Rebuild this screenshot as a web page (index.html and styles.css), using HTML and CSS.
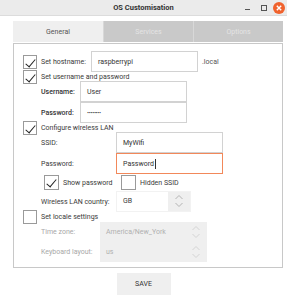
FILE: index.html
```html
<!DOCTYPE html>
<html lang="en">

<head>
    <meta charset="UTF-8">
    <title>OS Customisation</title>
    <link rel="stylesheet" href="styles.css">
</head>

<body>
    <div class="titlebar">
        <span></span>
        <span class="title">OS Customisation</span>
        <div class="controls">
            <span class="ctl-min"></span>
            <span class="ctl-max"></span>
            <span class="ctl-close">
                <svg width="12" height="12" viewBox="0 0 12 12">
                    <circle cx="6" cy="6" r="6" fill="#f0622d" />
                    <path d="M3.8 3.8 L8.2 8.2 M8.2 3.8 L3.8 8.2" stroke="#fff" stroke-width="1.4" />
                </svg>
            </span>
        </div>
    </div>

    <div class="window">
        <div class="tabs">
            <div class="tab active">General</div>
            <div class="tab">Services</div>
            <div class="tab">Options</div>
        </div>

        <div class="panel">
            <!-- hostname -->
            <div class="row row-host">
                <span class="check on"></span>
                <span class="label host-label">Set hostname:</span>
                <span class="input host-input">raspberrypi</span>
                <span class="suffix">.local</span>
            </div>

            <!-- user -->
            <div class="row row-check">
                <span class="check on"></span>
                <span class="label">Set username and password</span>
            </div>
            <div class="field-grid user-grid">
                <span class="label strong">Username:</span>
                <span class="input">User</span>
                <span class="label strong">Password:</span>
                <span class="input dots">&bull;&bull;&bull;&bull;&bull;&bull;&bull;&bull;</span>
            </div>

            <!-- wireless -->
            <div class="row row-check">
                <span class="check on"></span>
                <span class="label">Configure wireless LAN</span>
            </div>
            <div class="field-grid wifi-grid">
                <span class="label">SSID:</span>
                <span class="input">MyWifi</span>
                <span class="label">Password:</span>
                <span class="input focus">Password<span class="caret"></span></span>
            </div>
            <div class="row row-opts">
                <span class="check big on"></span>
                <span class="label opt-label">Show password</span>
                <span class="check big"></span>
                <span class="label">Hidden SSID</span>
            </div>
            <div class="field-grid country-grid">
                <span class="label">Wireless LAN country:</span>
                <span class="combo">
                    <span class="combo-text">GB</span>
                    <span class="spin">
                        <svg width="10" height="14" viewBox="0 0 10 14">
                            <path d="M1.5 5 L5 1.5 L8.5 5 M1.5 9 L5 12.5 L8.5 9" fill="none" stroke="#b4b4b4" stroke-width="1" />
                        </svg>
                    </span>
                </span>
            </div>

            <!-- locale -->
            <div class="row row-check">
                <span class="check"></span>
                <span class="label">Set locale settings</span>
            </div>
            <div class="field-grid locale-grid">
                <span class="label muted">Time zone:</span>
                <span class="combo disabled">
                    <span class="combo-text">America/New_York</span>
                    <span class="spin">
                        <svg width="10" height="14" viewBox="0 0 10 14">
                            <path d="M1.5 5 L5 1.5 L8.5 5 M1.5 9 L5 12.5 L8.5 9" fill="none" stroke="#d4d4d4" stroke-width="1" />
                        </svg>
                    </span>
                </span>
                <span class="label muted">Keyboard layout:</span>
                <span class="combo disabled">
                    <span class="combo-text">us</span>
                    <span class="spin">
                        <svg width="10" height="14" viewBox="0 0 10 14">
                            <path d="M1.5 5 L5 1.5 L8.5 5 M1.5 9 L5 12.5 L8.5 9" fill="none" stroke="#d4d4d4" stroke-width="1" />
                        </svg>
                    </span>
                </span>
            </div>
        </div>

        <div class="footer">
            <button class="btn">SAVE</button>
        </div>
    </div>
</body>

</html>
```

FILE: styles.css
```css
* {
    margin: 0;
    padding: 0;
    box-sizing: border-box;
    font-family: 'Roboto', 'Liberation Sans', sans-serif;
}

body {
    width: 287px;
    height: 300px;
    background: #ffffff;
    color: #3a3a3a;
    font-size: 7px;
    overflow: hidden;
}

/* title bar */
.titlebar {
    height: 16px;
    display: grid;
    grid-template-columns: 1fr auto 1fr;
    align-items: center;
    background: #ebebeb;
    border-bottom: 1px solid #dcdcdc;
}

.title {
    font-weight: bold;
    font-size: 7.5px;
    color: #333;
}

.controls {
    justify-self: end;
    display: flex;
    align-items: center;
    padding-right: 2px;
}

.ctl-min {
    width: 5px;
    height: 1px;
    background: #555;
    margin-top: 4px;
    margin-right: 11px;
}

.ctl-max {
    width: 6px;
    height: 6px;
    border: 1px solid #555;
    margin-right: 6px;
}

.ctl-close {
    display: flex;
}

/* window body */
.window {
    padding: 5px 4px 0 13px;
}

.tabs {
    display: flex;
    height: 21px;
}

.tab {
    width: 90px;
    display: flex;
    justify-content: center;
    align-items: center;
    background: #c9c9c9;
    color: #e4e4e4;
    font-size: 7px;
    border-left: 1px solid #d8d8d8;
}

.tab.active {
    background: #efefef;
    color: #555;
    border-left: none;
}

.panel {
    margin-top: 1px;
    width: 270px;
    height: 225px;
    border: 1px solid #c8c8c8;
    padding: 7px 0 0 9px;
}

.row {
    display: flex;
    align-items: center;
}

.row-host {
    height: 21px;
}

.row-check {
    height: 10px;
}

.check {
    width: 14px;
    height: 14px;
    border: 1px solid #9a9a9a;
    background: #fff;
    flex-shrink: 0;
    margin-right: 4px;
    position: relative;
}

.check.big {
    width: 15px;
    height: 15px;
}

.check.on::after {
    content: "";
    position: absolute;
    left: 4px;
    top: 1px;
    width: 4px;
    height: 9px;
    border-right: 1.2px solid #222;
    border-bottom: 1.2px solid #222;
    transform: rotate(40deg);
}

.label {
    white-space: nowrap;
}

.strong {
    font-weight: 500;
    color: #333;
}

.muted {
    color: #a8a8a8;
}

.host-label {
    width: 50px;
}

.input {
    width: 107px;
    height: 21px;
    border: 1px solid #d2d2d2;
    background: #fff;
    display: flex;
    align-items: center;
    padding-left: 6px;
    color: #333;
}

.dots {
    font-size: 6px;
    letter-spacing: -0.3px;
}

.input.focus {
    border-color: #f2885a;
    position: relative;
    z-index: 1;
}

.caret {
    width: 1px;
    height: 10px;
    background: #333;
    margin-left: 1px;
}

.suffix {
    margin-left: 4px;
    color: #555;
}

.field-grid {
    display: grid;
    align-items: center;
    padding-left: 18px;
}

.field-grid .input:nth-of-type(2),
.field-grid .combo:nth-of-type(2) {
    margin-top: -1px;
}

.user-grid {
    grid-template-columns: 39px 107px;
    grid-template-rows: 20px 21px;
}

.wifi-grid {
    grid-template-columns: 75px 107px;
    grid-template-rows: 20px 21px;
}

.row-opts {
    height: 17px;
    padding-left: 21px;
}

.opt-label {
    width: 58px;
}

.country-grid {
    grid-template-columns: 75px 75px;
    grid-template-rows: 21px;
}

.locale-grid {
    grid-template-columns: 59px 107px;
    grid-template-rows: 20px 20px;
}

.combo {
    height: 21px;
    display: flex;
    background: #fff;
    border: 1px solid #f2f2f2;
}

.combo-text {
    flex: 1;
    display: flex;
    align-items: center;
    padding-left: 6px;
}

.spin {
    width: 22px;
    display: flex;
    justify-content: center;
    align-items: center;
    background: #efefef;
}

.combo.disabled {
    height: 20px;
    background: #efefef;
    border: none;
    color: #b0b0b0;
}

.footer {
    display: flex;
    justify-content: center;
    padding: 5px 0 0 0;
    margin-left: -9px;
}

.btn {
    width: 54px;
    height: 22px;
    border: none;
    background: #efefef;
    color: #333;
    font-size: 7px;
}
```
